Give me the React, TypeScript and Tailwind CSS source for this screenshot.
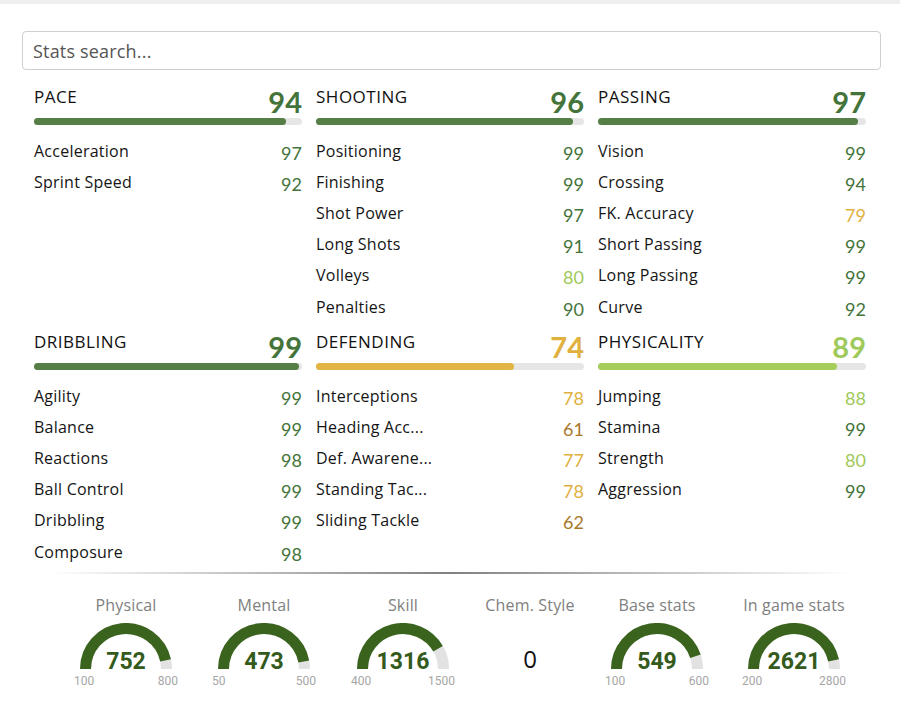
import React from 'react';

type Stat = { name: string; value: number };
type Category = { title: string; value: number; stats: Stat[] };

const topRow: Category[] = [
  {
    title: 'PACE',
    value: 94,
    stats: [
      { name: 'Acceleration', value: 97 },
      { name: 'Sprint Speed', value: 92 },
    ],
  },
  {
    title: 'SHOOTING',
    value: 96,
    stats: [
      { name: 'Positioning', value: 99 },
      { name: 'Finishing', value: 99 },
      { name: 'Shot Power', value: 97 },
      { name: 'Long Shots', value: 91 },
      { name: 'Volleys', value: 80 },
      { name: 'Penalties', value: 90 },
    ],
  },
  {
    title: 'PASSING',
    value: 97,
    stats: [
      { name: 'Vision', value: 99 },
      { name: 'Crossing', value: 94 },
      { name: 'FK. Accuracy', value: 79 },
      { name: 'Short Passing', value: 99 },
      { name: 'Long Passing', value: 99 },
      { name: 'Curve', value: 92 },
    ],
  },
];

// long names are shown clipped, as on the site
const bottomRow: Category[] = [
  {
    title: 'DRIBBLING',
    value: 99,
    stats: [
      { name: 'Agility', value: 99 },
      { name: 'Balance', value: 99 },
      { name: 'Reactions', value: 98 },
      { name: 'Ball Control', value: 99 },
      { name: 'Dribbling', value: 99 },
      { name: 'Composure', value: 98 },
    ],
  },
  {
    title: 'DEFENDING',
    value: 74,
    stats: [
      { name: 'Interceptions', value: 78 },
      { name: 'Heading Acc...', value: 61 },
      { name: 'Def. Awarene...', value: 77 },
      { name: 'Standing Tac...', value: 78 },
      { name: 'Sliding Tackle', value: 62 },
    ],
  },
  {
    title: 'PHYSICALITY',
    value: 89,
    stats: [
      { name: 'Jumping', value: 88 },
      { name: 'Stamina', value: 99 },
      { name: 'Strength', value: 80 },
      { name: 'Aggression', value: 99 },
    ],
  },
];

// colour buckets used for numbers and bars
const textColor = (v: number) => {
  if (v >= 90) return 'text-[#44743a]';
  if (v >= 80) return 'text-[#9fc95a]';
  if (v >= 70) return 'text-[#e0b13e]';
  return 'text-[#a9782c]';
};

const barColor = (v: number) => {
  if (v >= 90) return 'bg-[#557f46]';
  if (v >= 80) return 'bg-[#a4cd5c]';
  if (v >= 70) return 'bg-[#e2b443]';
  return 'bg-[#a9782c]';
};

const CategoryBlock = ({ cat }: { cat: Category }) => (
  <div className="w-[269px]">
    <div className="flex h-[33px] items-start justify-between">
      <span className="mt-[-1px] text-[17px] font-medium tracking-[0.03em] text-[#111]">
        {cat.title}
      </span>
      <span
        className={`mt-[-2px] text-[29px] font-bold leading-[38px] ${textColor(cat.value)}`}
        style={{ fontFamily: 'Lato, sans-serif' }}
      >
        {cat.value}
      </span>
    </div>
    <div className="h-[7px] w-full rounded-full bg-[#e6e6e6]">
      <div
        className={`h-full rounded-full ${barColor(cat.value)}`}
        style={{ width: `${cat.value}%` }}
      />
    </div>
    <div className="mt-[10px] flex flex-col">
      {cat.stats.map((s) => (
        <div key={s.name} className="flex h-[31.2px] items-center justify-between">
          <span className="text-[16px] tracking-[0.015em] text-[#151515]">{s.name}</span>
          <span
            className={`mt-[5px] text-[18px] ${textColor(s.value)}`}
            style={{ fontFamily: 'Lato, sans-serif' }}
          >
            {s.value}
          </span>
        </div>
      ))}
    </div>
  </div>
);

type GaugeProps = { label: string; value: number; min: number; max: number; width: string };

const Gauge = ({ label, value, min, max, width }: GaugeProps) => {
  const frac = Math.max(0, Math.min(1, (value - min) / (max - min)));
  const r = 40.5;
  const cx = 46;
  const cy = 46;
  const angle = Math.PI * (1 - frac);
  const ex = cx + r * Math.cos(angle);
  const ey = cy - r * Math.sin(angle);
  return (
    <div className={`flex flex-col items-center ${width}`}>
      <span className="text-[16px] tracking-[0.01em] text-[#808080]">{label}</span>
      <div className="relative mt-[6px] h-[46px] w-[92px]">
        <svg width="92" height="46" viewBox="0 0 92 46">
          <path d={`M ${cx - r} ${cy} A ${r} ${r} 0 0 1 ${cx + r} ${cy}`} fill="none" stroke="#e2e2e2" strokeWidth="11" />
          <path d={`M ${cx - r} ${cy} A ${r} ${r} 0 0 1 ${ex} ${ey}`} fill="none" stroke="#3a631d" strokeWidth="11" />
        </svg>
        <span
          className="absolute inset-x-0 bottom-[-10px] text-center text-[23px] font-bold text-[#345a1c]"
          style={{ fontFamily: 'Roboto, sans-serif' }}
        >
          {value}
        </span>
      </div>
      <div
        className="mt-[4px] flex w-[104px] justify-between text-[12px] leading-[16px] text-[#a6a6a6]"
        style={{ fontFamily: 'Roboto, sans-serif' }}
      >
        <span>{min}</span>
        <span>{max}</span>
      </div>
    </div>
  );
};

export default function App() {
  return (
    <div className="min-h-[711px] w-[900px] bg-white" style={{ fontFamily: '"Open Sans", sans-serif' }}>
      <div className="h-[4px] bg-[#eeeeee]" />
      <div className="px-[22px] pt-[27px]">
        <input
          type="text"
          placeholder="Stats search..."
          className="h-[39px] w-[859px] rounded-[4px] border border-[#cfcfcf] px-[10px] text-[18px] tracking-[0.01em] text-[#333] outline-none placeholder:text-[#555]"
        />
        <div className="px-[12px] pt-[15px]">
          <div className="flex gap-[14px]">
            {topRow.map((c) => (
              <CategoryBlock key={c.title} cat={c} />
            ))}
          </div>
          <div className="mt-[8px] flex gap-[14px]">
            {bottomRow.map((c) => (
              <CategoryBlock key={c.title} cat={c} />
            ))}
          </div>
        </div>
      </div>
      <div className="mx-[50px] mt-[5px] h-[2px] bg-gradient-to-r from-transparent via-[#808080] to-transparent" />
      <div className="flex pl-[57px] pt-[19px]">
        <Gauge label="Physical" value={752} min={100} max={800} width="w-[138px]" />
        <Gauge label="Mental" value={473} min={50} max={500} width="w-[138px]" />
        <Gauge label="Skill" value={1316} min={400} max={1500} width="w-[140px]" />
        <div className="flex w-[114px] flex-col items-center">
          <span className="text-[16px] tracking-[0.01em] text-[#808080]">Chem. Style</span>
          <span className="mt-[24px] text-[24px] text-[#111]">0</span>
        </div>
        <Gauge label="Base stats" value={549} min={100} max={600} width="w-[140px]" />
        <Gauge label="In game stats" value={2621} min={200} max={2800} width="w-[134px]" />
      </div>
    </div>
  );
}
